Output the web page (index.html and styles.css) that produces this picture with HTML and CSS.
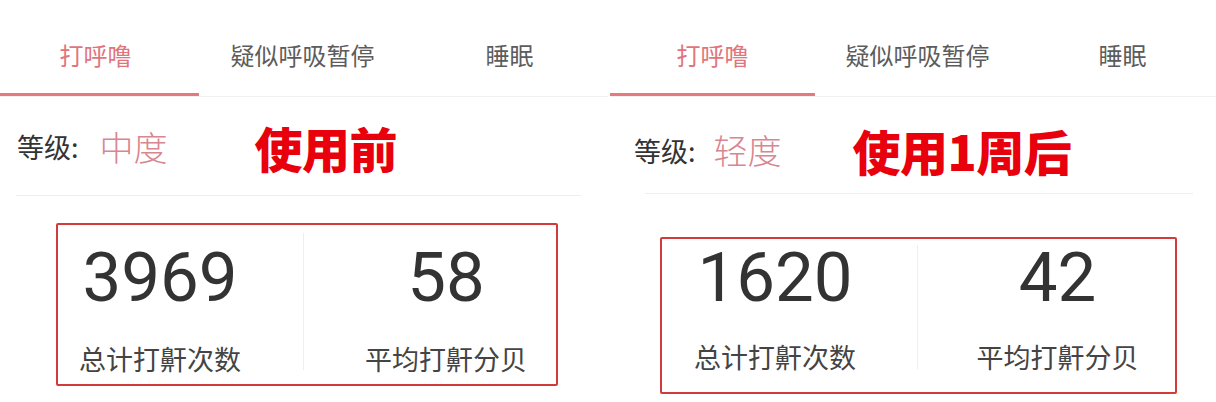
FILE: index.html
```html
<!DOCTYPE html>
<html lang="zh-CN">
<head>
<meta charset="utf-8">
<title>打鼾对比</title>
<link rel="stylesheet" href="styles.css">
</head>
<body>
<div class="screens">
  <section class="panel panel--before">
    <nav class="tabs">
      <div class="tab tab--active">打呼噜</div>
      <div class="tab">疑似呼吸暂停</div>
      <div class="tab">睡眠</div>
    </nav>
    <div class="level">
      <span class="level-label">等级:</span>
      <span class="level-value">中度</span>
      <span class="stamp">使用前</span>
    </div>
    <div class="divider"></div>
    <div class="stats">
      <div class="stat stat--count">
        <div class="stat-num">3969</div>
        <div class="stat-label">总计打鼾次数</div>
      </div>
      <div class="stats-sep"></div>
      <div class="stat stat--db">
        <div class="stat-num">58</div>
        <div class="stat-label">平均打鼾分贝</div>
      </div>
    </div>
  </section>
  <section class="panel panel--after">
    <nav class="tabs">
      <div class="tab tab--active">打呼噜</div>
      <div class="tab">疑似呼吸暂停</div>
      <div class="tab">睡眠</div>
    </nav>
    <div class="level">
      <span class="level-label">等级:</span>
      <span class="level-value">轻度</span>
      <span class="stamp">使用1周后</span>
    </div>
    <div class="divider"></div>
    <div class="stats">
      <div class="stat stat--count">
        <div class="stat-num">1620</div>
        <div class="stat-label">总计打鼾次数</div>
      </div>
      <div class="stats-sep"></div>
      <div class="stat stat--db">
        <div class="stat-num">42</div>
        <div class="stat-label">平均打鼾分贝</div>
      </div>
    </div>
  </section>
</div>
</body>
</html>
```

FILE: styles.css
```css
html, body {
  margin: 0;
  padding: 0;
  background: #ffffff;
}
body {
  width: 1216px;
  height: 402px;
  overflow: hidden;
  font-family: "Noto Sans CJK SC", "Noto Sans", sans-serif;
}
.screens {
  display: flex;
  width: 1216px;
  height: 402px;
}
.panel {
  display: flex;
  flex-direction: column;
  flex: 0 0 auto;
  overflow: hidden;
  height: 402px;
}
.panel--before {
  margin-left: -8px;
  width: 616px;
  --tab-w: 207px;
  --level-pt: 1px;
  --level-h: 98px;
  --label-pl: 25px;
  --value-ml: 21px;
  --stamp-ml: 87px;
  --div-ml: 24px;
  --div-mr: 27px;
  --box-mt: 27px;
  --box-ml: 64px;
  --box-w: 502px;
  --box-h: 163px;
  --box-pt: 18px;
  --num-gap: 32px;
  --col1-w: 245px;
  --col1-pr: 41px;
  --col2-pl: 32px;
  --sep-mt: 8px;
  --sep-mb: 14px;
}
.panel--after {
  margin-left: 2px;
  width: 606px;
  --tab-w: 205px;
  --level-pt: 10px;
  --level-h: 96px;
  --label-pl: 24px;
  --value-ml: 18px;
  --stamp-ml: 71px;
  --div-ml: 35px;
  --div-mr: 23px;
  --box-mt: 43px;
  --box-ml: 50px;
  --box-w: 517px;
  --box-h: 157px;
  --box-pt: 4px;
  --num-gap: 30px;
  --col1-w: 255px;
  --col1-pr: 29px;
  --col2-pl: 22px;
  --sep-mt: 6px;
  --sep-mb: 23px;
}

/* tabs */
.tabs {
  display: flex;
  margin-top: 16px;
  border-bottom: 1px solid #f1f1f1;
}
.tab {
  flex: 0 0 var(--tab-w);
  height: 80px;
  padding-bottom: 2px;
  box-sizing: border-box;
  display: flex;
  align-items: center;
  justify-content: center;
  font-size: 24px;
  line-height: 1;
  color: #5c5c5c;
}
.tab--active {
  color: #e0757c;
  box-shadow: inset 0 -3px 0 #e47a7e;
}

/* level row */
.level {
  display: flex;
  align-items: center;
  height: var(--level-h);
  padding-top: var(--level-pt);
  padding-left: var(--label-pl);
  box-sizing: border-box;
  line-height: 1;
}
.level-label {
  font-size: 27px;
  color: #333333;
}
.level-value {
  margin-left: var(--value-ml);
  font-size: 34px;
  font-weight: 300;
  color: #d8868f;
}
.stamp {
  margin-left: var(--stamp-ml);
  font-size: 48px;
  font-weight: 900;
  color: #e8000c;
  letter-spacing: -0.5px;
}
.divider {
  height: 1px;
  background: #eeeeee;
  margin: 0 var(--div-mr) 0 var(--div-ml);
}

/* stats box */
.stats {
  display: flex;
  box-sizing: border-box;
  margin-top: var(--box-mt);
  margin-left: var(--box-ml);
  width: var(--box-w);
  height: var(--box-h);
  border: 2px solid #d23b3c;
  border-radius: 2px;
}
.stat {
  display: flex;
  flex-direction: column;
  align-items: center;
  box-sizing: border-box;
  padding-top: var(--box-pt);
}
.stat--count {
  flex: 0 0 var(--col1-w);
  padding-right: var(--col1-pr);
}
.stat--db {
  flex: 1 1 auto;
  padding-left: var(--col2-pl);
}
.stats-sep {
  flex: 0 0 1px;
  background: #eeeeee;
  margin-top: var(--sep-mt);
  margin-bottom: var(--sep-mb);
}
.stat-num {
  font-family: "Roboto", "Noto Sans", sans-serif;
  font-size: 69px;
  line-height: 70px;
  color: #333333;
}
.stat-label {
  margin-top: var(--num-gap);
  font-size: 27px;
  line-height: 27px;
  color: #444444;
}
```
